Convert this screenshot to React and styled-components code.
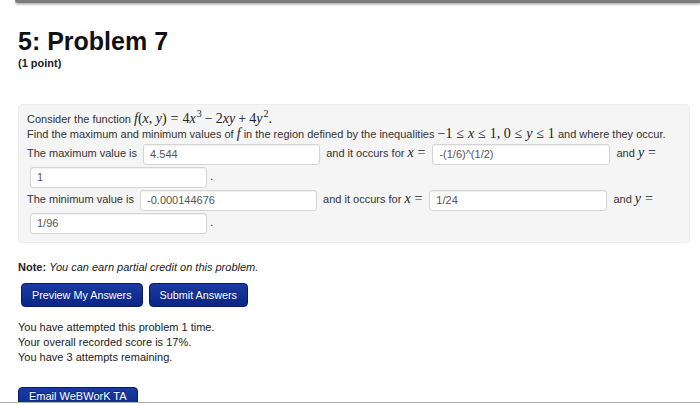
import React from 'react';
import styled, {createGlobalStyle} from 'styled-components';

const GlobalStyle = createGlobalStyle`
body{
	margin: 0;
	background: #fff;
	font-family: "Liberation Sans", Arial, sans-serif;
	color: #333;
	overflow: hidden;
}
`;

const Page = styled.div`
width: 700px;
height: 405px;
overflow: hidden;
`;

const TopBar = styled.div`
height: 3px;
margin-left: 15px;
background: #7d7d7d;
border-bottom-left-radius: 4px;
box-shadow: 0 1px 3px rgba(0,0,0,.45);
`;

const Main = styled.div`
padding: 0 10px 0 18px;
`;

const Title = styled.h2`
margin: 24px 0 0;
font-size: 25px;
line-height: 29px;
font-weight: bold;
color: #111;
`;

const Points = styled.div`
font-size: 11px;
font-weight: bold;
line-height: 14px;
color: #222;
`;

const Panel = styled.div`
box-sizing: border-box;
width: 672px;
margin-top: 34px;
padding: 7px 8px 8px;
background: #f5f5f5;
border: 1px solid #ececec;
border-radius: 4px;
font-size: 11px;
`;

const Line = styled.div`
line-height: 15px;
white-space: nowrap;
`;

const AnswerFlow = styled.div`
line-height: 23px;
`;

const Math = styled.span`
font-family: "Liberation Serif", "DejaVu Serif", serif;
font-size: 14px;
line-height: 0;
color: #222;
sup{
	font-size: 10px;
	line-height: 0;
	margin-left: 1px;
}
`;

const Var = styled.i`
font-style: italic;
`;

const Op = styled.span`
margin: 0 ${p => (p.$rel ? '0.28em' : '0.22em')};
`;

const Answer = styled.input`
box-sizing: border-box;
width: ${p => p.$w || 177}px;
height: 21px;
margin: 0 3px;
padding: 0 6px;
vertical-align: middle;
font-family: "Liberation Sans", Arial, sans-serif;
font-size: 11px;
color: #555;
background: #fff;
border: 1px solid #d4d4d4;
border-radius: 3px;
box-shadow: inset 0 1px 1px rgba(0,0,0,.06);
outline: none;
`;

const Note = styled.p`
margin: 17px 0 0;
font-size: 11px;
line-height: 15px;
color: #222;
b{ font-weight: bold; }
i{ font-style: italic; }
`;

const ButtonRow = styled.div`
display: flex;
gap: 6px;
margin: 8px 0 0 3px;
`;

const Button = styled.button`
height: 24px;
padding: 0 10px;
font-family: "Liberation Sans", Arial, sans-serif;
font-size: 10.8px;
color: #fff;
background: linear-gradient(#1a3ba0, #0b2486);
border: 1px solid #08196a;
border-radius: 4px;
text-shadow: 0 -1px 0 rgba(0,0,0,.3);
cursor: pointer;
`;

const Attempts = styled.div`
margin-top: 13px;
font-size: 11px;
line-height: 15px;
color: #222;
`;

const EmailButton = styled(Button)`
display: block;
margin-top: 22px;
height: auto;
padding: 1px 10px 9px;
line-height: 14px;
font-size: 11px;
`;

const Footer = styled.div`
position: fixed;
left: 0;
right: 0;
top: 402px;
bottom: 0;
background: #fff;
border-top: 1px solid #b0b0b0;
`;

export default class App extends React.Component {
	render(){
		return (
		<Page>
			<GlobalStyle/>
			<TopBar/>
			<Main>
				<Title>5: Problem 7</Title>
				<Points>(1 point)</Points>
				<Panel>
					<Line>
						Consider the function <Math><Var>f</Var>(<Var>x</Var>, <Var>y</Var>)<Op $rel>=</Op>4<Var>x</Var><sup>3</sup><Op>−</Op>2<Var>xy</Var><Op>+</Op>4<Var>y</Var><sup>2</sup>.</Math>
					</Line>
					<Line>
						Find the maximum and minimum values of <Math><Var>f</Var></Math> in the region defined by the inequalities <Math>−1<Op $rel>≤</Op><Var>x</Var><Op $rel>≤</Op>1, 0<Op $rel>≤</Op><Var>y</Var><Op $rel>≤</Op>1</Math> and where they occur.
					</Line>
					<AnswerFlow>
						The maximum value is <Answer readOnly defaultValue="4.544"/> and it occurs for <Math><Var>x</Var><Op $rel>=</Op></Math><Answer readOnly $w={178} defaultValue="-(1/6)^(1/2)"/> and <Math><Var>y</Var><Op $rel>=</Op></Math> <Answer readOnly defaultValue="1"/>.
						<br/>
						The minimum value is <Answer readOnly defaultValue="-0.000144676"/> and it occurs for <Math><Var>x</Var><Op $rel>=</Op></Math><Answer readOnly $w={178} defaultValue="1/24"/> and <Math><Var>y</Var><Op $rel>=</Op></Math> <Answer readOnly defaultValue="1/96"/>.
					</AnswerFlow>
				</Panel>
				<Note><b>Note:</b> <i>You can earn partial credit on this problem.</i></Note>
				<ButtonRow>
					<Button>Preview My Answers</Button>
					<Button>Submit Answers</Button>
				</ButtonRow>
				<Attempts>
					You have attempted this problem 1 time.<br/>
					Your overall recorded score is 17%.<br/>
					You have 3 attempts remaining.
				</Attempts>
				<EmailButton>Email WeBWorK TA</EmailButton>
			</Main>
			<Footer/>
		</Page>
		);
	}
}
